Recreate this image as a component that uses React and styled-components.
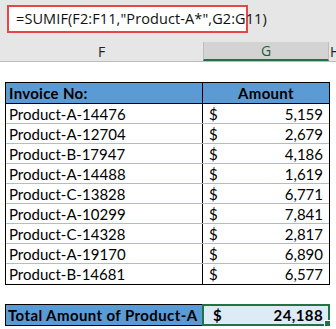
import React from 'react'
import styled, { createGlobalStyle } from 'styled-components'

const rows = [
  ['Product-A-14476', '5,159'],
  ['Product-A-12704', '2,679'],
  ['Product-B-17947', '4,186'],
  ['Product-A-14488', '1,619'],
  ['Product-C-13828', '6,771'],
  ['Product-A-10299', '7,841'],
  ['Product-C-14328', '2,817'],
  ['Product-A-19170', '6,890'],
  ['Product-B-14681', '6,577'],
]

const App = () => {
  return (
    <Page>
      <GlobalStyle />
      <TopBar>
        <FormulaBox>=SUMIF(F2:F11,"Product-A*",G2:G11)</FormulaBox>
      </TopBar>
      <ColHeaders>
        <ColHead>F</ColHead>
        <ColHead active>G</ColHead>
        <ColHead edge>H</ColHead>
      </ColHeaders>
      <Sheet>
        <Table>
          <HeadRow>
            <NameCell bold>Invoice No:</NameCell>
            <HeadAmount>Amount</HeadAmount>
          </HeadRow>
          {rows.map(([name, amt], i) => (
            <Row key={name} last={i === rows.length - 1}>
              <NameCell>{name}</NameCell>
              <AmountCell>
                <span>$</span>
                <span>{amt}</span>
              </AmountCell>
            </Row>
          ))}
        </Table>
        <TotalRow>
          <TotalLabel>Total Amount of Product-A</TotalLabel>
          <TotalValue>
            <span>$</span>
            <span>24,188</span>
            <Handle />
          </TotalValue>
        </TotalRow>
      </Sheet>
    </Page>
  )
}

export default App

const GlobalStyle = createGlobalStyle`
  html, body {
    margin: 0;
    padding: 0;
    background: #ffffff;
  }
`
const Page = styled.div`
  width: 336px;
  height: 329px;
  overflow: hidden;
  font-family: Lato, 'Liberation Sans', sans-serif;
  color: #000;
`
const TopBar = styled.div`
  background: #e6e6e6;
  height: 38px;
  padding: 5px 0 0 7px;
  box-sizing: border-box;
`
const FormulaBox = styled.div`
  width: 241px;
  height: 28px;
  box-sizing: border-box;
  border: 2px solid #e84545;
  background: #fff;
  font-family: 'Open Sans', sans-serif;
  font-size: 14.5px;
  letter-spacing: 0.1px;
  line-height: 24px;
  padding-left: 7px;
  white-space: nowrap;
  color: #111;
`
const ColHeaders = styled.div`
  display: grid;
  grid-template-columns: 203px 126px 7px;
  height: 24px;
  background: #e6e6e6;
  border-bottom: 1px solid #bcbcbc;
  box-sizing: border-box;
  padding-top: 4px;
`
const ColHead = styled.div`
  display: flex;
  align-items: center;
  justify-content: ${p => (p.edge ? 'flex-start' : 'center')};
  padding-left: ${p => (p.edge ? '1px' : '0')};
  font-family: 'Open Sans', sans-serif;
  font-size: 14px;
  color: ${p => (p.active ? '#1e5e3a' : '#222')};
  background: ${p => (p.active ? '#d3d3d3' : 'transparent')};
  border-left: ${p => (p.active ? '1px solid #bdbdbd' : 'none')};
  border-right: ${p => (p.active ? '1px solid #bdbdbd' : 'none')};
  border-bottom: ${p => (p.active ? '2px solid #217346' : 'none')};
  overflow: hidden;
`
const Sheet = styled.div`
  padding: 20px 0 0 5px;
`
const Table = styled.div`
  width: 325px;
  box-sizing: border-box;
  border: 1px solid #000;
`
const Row = styled.div`
  display: grid;
  grid-template-columns: 197px 126px;
  height: 20px;
  box-sizing: border-box;
  border-bottom: ${p => (p.last ? 'none' : '1px solid #9bc2e6')};
  font-size: 15px;
`
const HeadRow = styled(Row)`
  height: 21px;
  background: #5b9bd5;
  border-bottom: 1px solid #000;
  font-weight: 700;
  letter-spacing: 0.3px;
`
const NameCell = styled.div`
  display: flex;
  align-items: center;
  padding-left: 3px;
  font-weight: ${p => (p.bold ? 700 : 400)};
  border-right: 1px solid #000;
  white-space: nowrap;
`
const HeadAmount = styled.div`
  display: flex;
  align-items: center;
  justify-content: center;
`
const AmountCell = styled.div`
  display: flex;
  align-items: center;
  justify-content: space-between;
  padding: 0 6px 0 6px;
`
const TotalRow = styled.div`
  display: grid;
  grid-template-columns: 197px 128px;
  height: 22px;
  margin-top: 19px;
  font-size: 15px;
  font-weight: 700;
  letter-spacing: 0.4px;
`
const TotalLabel = styled.div`
  display: flex;
  align-items: center;
  padding-left: 2px;
  background: #5b9bd5;
  border: 1px solid #000;
  border-right: none;
  white-space: nowrap;
`
const TotalValue = styled.div`
  position: relative;
  display: flex;
  align-items: center;
  justify-content: space-between;
  padding: 0 5px 0 9px;
  background: #ddebf7;
  border: 2px solid #217346;
  box-sizing: border-box;
`
const Handle = styled.div`
  position: absolute;
  right: -3px;
  bottom: -3px;
  width: 5px;
  height: 5px;
  background: #217346;
  border: 1px solid #fff;
`
